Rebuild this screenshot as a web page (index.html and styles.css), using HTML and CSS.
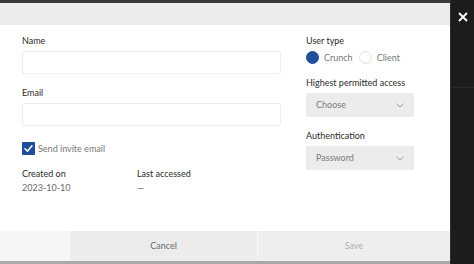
FILE: index.html
```html
<!DOCTYPE html>
<html>
<head>
<meta charset="utf-8">
<link rel="stylesheet" href="styles.css">
</head>
<body>
<div class="screen">
  <div class="dialog">
    <div class="topbar"></div>
    <div class="header"></div>
    <div class="body">
      <div class="col-left">
        <div class="label">Name</div>
        <div class="input"></div>
        <div class="label">Email</div>
        <div class="input"></div>
        <div class="check-row">
          <span class="checkbox">
            <svg width="13" height="13" viewBox="0 0 13 13"><path d="M3 6.8 L5.4 9.2 L10 3.8" fill="none" stroke="#fff" stroke-width="1.6" stroke-linecap="round" stroke-linejoin="round"/></svg>
          </span>
          <span class="check-text">Send invite email</span>
        </div>
        <div class="meta">
          <div class="meta-item">
            <div class="label">Created on</div>
            <div class="value">2023-10-10</div>
          </div>
          <div class="meta-item">
            <div class="label">Last accessed</div>
            <div class="value">—</div>
          </div>
        </div>
      </div>
      <div class="col-right">
        <div class="label">User type</div>
        <div class="radio-row">
          <span class="radio on"></span><span class="radio-text">Crunch</span>
          <span class="radio"></span><span class="radio-text">Client</span>
        </div>
        <div class="label">Highest permitted access</div>
        <div class="select"><span>Choose</span>
          <svg width="8" height="5" viewBox="0 0 8 5"><path d="M0.5 0.8 L4 4 L7.5 0.8" fill="none" stroke="#9a9a9a" stroke-width="1"/></svg>
        </div>
        <div class="label">Authentication</div>
        <div class="select"><span>Password</span>
          <svg width="8" height="5" viewBox="0 0 8 5"><path d="M0.5 0.8 L4 4 L7.5 0.8" fill="none" stroke="#9a9a9a" stroke-width="1"/></svg>
        </div>
      </div>
    </div>
    <div class="footer">
      <div class="foot-spacer"></div>
      <div class="btn cancel">Cancel</div>
      <div class="btn save">Save</div>
    </div>
    <div class="bottomstrip"></div>
  </div>
  <div class="side">
    <div class="side-top">
      <svg class="close" width="10" height="10" viewBox="0 0 10 10"><path d="M1 1 L9 9 M9 1 L1 9" stroke="#fff" stroke-width="1.8"/></svg>
    </div>
  </div>
</div>
</body>
</html>
```
FILE: styles.css
```css
* { box-sizing: border-box; }
html, body { margin: 0; padding: 0; }
body {
  width: 474px;
  height: 264px;
  overflow: hidden;
  font-family: Lato, "Open Sans", sans-serif;
  font-size: 9px;
  line-height: 12px;
  color: #2b2b2b;
  background: #1c1c1c;
}
.screen { display: flex; height: 264px; }
.dialog {
  width: 450px;
  display: flex;
  flex-direction: column;
  background: #fff;
}
.topbar { height: 3px; background: #3a3a3a; }
.header { height: 22px; background: #ececec; }
.body {
  height: 206px;
  display: flex;
  gap: 25px;
  padding: 10px 0 0 22px;
}
.col-left { width: 259px; display: flex; flex-direction: column; }
.col-right { width: 108px; display: flex; flex-direction: column; }
.label { color: #2b2b2b; margin-bottom: 4px; }
.input {
  height: 23px;
  border: 1px solid #eeeeee;
  border-radius: 2px;
  margin-bottom: 13px;
}
.check-row { display: flex; align-items: center; gap: 3px; height: 13px; margin-top: 3px; }
.checkbox {
  width: 13px; height: 13px;
  background: #1f4e9c;
  border-radius: 1px;
  display: flex;
}
.check-text { color: #777; }
.meta { display: flex; margin-top: 13px; }
.meta-item { width: 115px; }
.meta-item .label { margin-bottom: 2px; }
.value { color: #6a6a6a; }
.radio-row { display: flex; align-items: center; height: 13px; margin-bottom: 13px; }
.radio {
  width: 13px; height: 13px;
  border-radius: 50%;
  border: 1px solid #e2e2e2;
  flex: none;
}
.radio.on { background: #1f4e9c; border-color: #1f4e9c; }
.radio-text { color: #777; margin: 0 6px 0 5px; }
.select {
  height: 24px;
  width: 108px;
  background: #ececec;
  border-radius: 1px;
  display: flex;
  align-items: center;
  justify-content: space-between;
  padding: 0 10px 0 10px;
  color: #7a7a7a;
  margin-bottom: 13px;
}
.footer { height: 30px; display: flex; }
.foot-spacer { width: 70px; background: #f6f6f6; }
.btn {
  display: flex;
  align-items: center;
  justify-content: center;
  background: #ececec;
}
.cancel { width: 188px; color: #6a6a6a; border-right: 1px solid #f8f8f8; }
.save { flex: 1; color: #b0b0b0; background: #eeeeee; }
.bottomstrip { height: 3px; background: #a9a9a9; }
.side {
  flex: 1;
  background: #1c1c1c;
  border-left: 1px solid #2e2e2e;
}
.side-top {
  height: 88px;
  border-bottom: 1px solid #2a2a2a;
  display: flex;
  justify-content: center;
  padding-top: 12px;
}
.close { display: block; }
```
